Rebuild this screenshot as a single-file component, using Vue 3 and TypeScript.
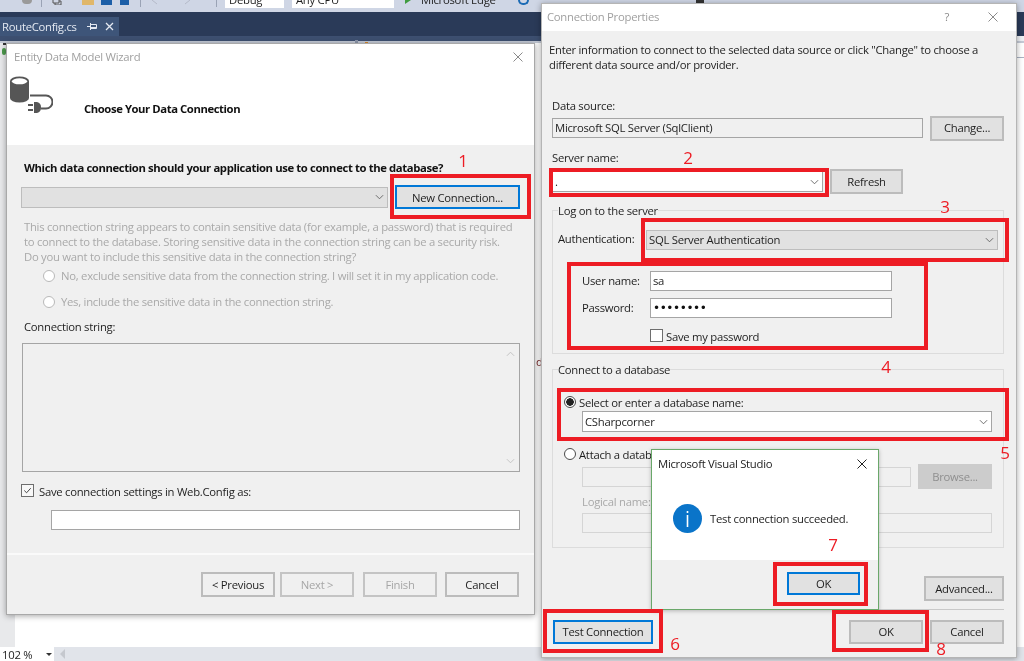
<script setup lang="ts">
interface Box { n: number; x: number; y: number; r: number; b: number; tx: number; ty: number }
const boxes: Box[] = [
  { n: 1, x: 390, y: 174, r: 531, b: 219, tx: 463, ty: 161 },
  { n: 2, x: 549, y: 168, r: 829, b: 197, tx: 688, ty: 158 },
  { n: 3, x: 641, y: 218, r: 1009, b: 262, tx: 945, ty: 207 },
  { n: 4, x: 567, y: 262, r: 928, b: 350, tx: 886, ty: 367 },
  { n: 5, x: 557, y: 388, r: 1009, b: 441, tx: 1005, ty: 453 },
  { n: 6, x: 543, y: 609, r: 663, b: 653, tx: 675, ty: 644 },
  { n: 7, x: 773, y: 562, r: 868, b: 606, tx: 833, ty: 545 },
  { n: 8, x: 832, y: 610, r: 929, b: 652, tx: 941, ty: 649 },
]
const boxStyle = (b: Box) => ({ left: `${b.x}px`, top: `${b.y}px`, width: `${b.r - b.x}px`, height: `${b.b - b.y}px` })
const numStyle = (b: Box) => ({ left: `${b.tx}px`, top: `${b.ty}px` })
</script>

<template>
  <div class="desktop">
    <div class="toolbar">
      <span class="t-round"></span>
      <span class="t-sep t-sep-a"></span>
      <svg class="t-copy" viewBox="0 0 10 5"><path d="M1 0v3h6V0M3 3v2h6V1H7" /></svg>
      <span class="t-folder"></span>
      <span class="t-save"></span>
      <span class="t-save t-save-b"></span>
      <span class="t-sep t-sep-b"></span>
      <svg class="t-arrow" viewBox="0 0 8 6"><path d="M1 0l5 4" /></svg>
      <svg class="t-arrow t-arrow-b" viewBox="0 0 8 6"><path d="M7 0L2 4" /></svg>
      <span class="t-sep t-sep-c"></span>
      <span class="t-select t-debug"><span>Debug</span></span>
      <span class="t-select t-cpu"><span>Any CPU</span></span>
      <span class="t-play"></span>
      <span class="t-edge"><span>Microsoft Edge</span></span>
      <span class="t-ring"></span>
      <span class="t-dark"></span>
    </div>
    <div class="docband">
      <div class="doctab">
        <span class="doctab-name">RouteConfig.cs</span>
        <svg class="doctab-pin" viewBox="0 0 11 9"><path d="M0 4.500h3M3.500 1v7M3.500 2.500h6v4h-6M3.500 5.500h6" /></svg>
        <svg class="doctab-x" viewBox="0 0 9 9"><path d="M1 1l7 7M8 1L1 8" /></svg>
      </div>
    </div>
    <div class="tabstrip"></div>
    <div class="editor">
      <div class="gutter"></div>
      <i class="mark mark-file"></i>
      <i class="mark mark-green"></i>
      <i class="mark mark-split"></i>
      <i class="mark mark-orange"></i>
      <span class="editor-ch">d</span>
      <div class="editor-rule"></div>
    </div>
    <div class="zoombar">
      <span class="zoombox">102 %<i class="zoomcaret"></i></span>
      <i class="zoomleft"></i>
    </div>

    <section class="win wizard">
      <div class="wiz-title">
        <span>Entity Data Model Wizard</span>
        <svg class="close close-light" viewBox="0 0 10 10"><path d="M0.5 0.5l9 9M9.5 0.5l-9 9" /></svg>
      </div>
      <div class="wiz-head">
        <svg class="dbicon" viewBox="0 0 44 37">
          <path d="M1 5a9.500 4.500 0 0 1 19 0v17a9.500 4.500 0 0 1-19 0z" fill="#565656" />
          <ellipse cx="10.500" cy="5.300" rx="7.600" ry="3" fill="#fff" />
          <path d="M21 19.500h16a6.500 6.500 0 0 1 0 13h-5" fill="none" stroke="#565656" stroke-width="2" />
          <path d="M25 26h3a6 5.500 0 0 1 4 5.500a6 5.500 0 0 1-4 5.500h-3z" fill="#565656" />
          <path d="M19 29h5M19 34h5" stroke="#565656" stroke-width="2" />
        </svg>
        <h1>Choose Your Data Connection</h1>
      </div>
      <div class="wiz-body">
        <p class="q">Which data connection should your application use to connect to the database?</p>
        <div class="conn-row">
          <div class="combo combo-off">
            <svg class="chev" viewBox="0 0 10 6"><path d="M1 1l4 4 4-4" /></svg>
          </div>
          <button class="btn btn-primary btn-new">New Connection...</button>
        </div>
        <p class="warn">
          This connection string appears to contain sensitive data (for example, a password) that is required<br />
          to connect to the database. Storing sensitive data in the connection string can be a security risk.<br />
          Do you want to include this sensitive data in the connection string?
        </p>
        <div class="w-radio w-radio-a"><i class="radio radio-off"></i><span>No, exclude sensitive data from the connection string. I will set it in my application code.</span></div>
        <div class="w-radio w-radio-b"><i class="radio radio-off"></i><span>Yes, include the sensitive data in the connection string.</span></div>
        <div class="cs-label">Connection string:</div>
        <div class="cs-area">
          <div class="cs-scroll">
            <svg class="chev chev-up" viewBox="0 0 10 6"><path d="M1 5l4-4 4 4" /></svg>
            <svg class="chev" viewBox="0 0 10 6"><path d="M1 1l4 4 4-4" /></svg>
          </div>
        </div>
        <div class="save-row">
          <span class="check">
            <svg viewBox="0 0 12 12"><path d="M2.500 6l2.500 2.500 4.500-5" /></svg>
          </span>
          <span class="tx-sm">Save connection settings in Web.Config as:</span>
        </div>
        <div class="field save-input"></div>
      </div>
      <div class="wiz-foot">
        <div class="btn-group btn-group-a">
          <button class="btn">&lt; Previous</button>
          <button class="btn btn-off">Next &gt;</button>
        </div>
        <div class="btn-group btn-group-b">
          <button class="btn btn-off">Finish</button>
          <button class="btn">Cancel</button>
        </div>
      </div>
    </section>

    <section class="win props">
      <div class="props-title">
        <span>Connection Properties</span>
        <span class="help">?</span>
        <svg class="close close-light close-props" viewBox="0 0 10 10"><path d="M0.5 0.5l9 9M9.5 0.5l-9 9" /></svg>
      </div>
      <div class="props-body">
        <p class="intro">Enter information to connect to the selected data source or click "Change" to choose a<br />different data source and/or provider.</p>
        <div class="props-main">
          <div class="ds-label">Data source:</div>
          <div class="ds-row">
            <div class="field ds-field">Microsoft SQL Server (SqlClient)</div>
            <button class="btn btn-74">Change...</button>
          </div>
          <div class="sn-label">Server name:</div>
          <div class="sn-row">
            <div class="combo sn-combo">.<svg class="chev" viewBox="0 0 10 6"><path d="M1 1l4 4 4-4" /></svg></div>
            <button class="btn sn-refresh">Refresh</button>
          </div>
          <fieldset class="group group-logon">
            <legend>Log on to the server</legend>
            <div class="auth-row">
              <span class="auth-label">Authentication:</span>
              <div class="combo combo-off auth-combo">SQL Server Authentication<svg class="chev" viewBox="0 0 10 6"><path d="M1 1l4 4 4-4" /></svg></div>
            </div>
            <div class="cred-row cred-user">
              <span class="cred-label">User name:</span>
              <div class="field cred-field">sa</div>
            </div>
            <div class="cred-row cred-pass">
              <span class="cred-label">Password:</span>
              <div class="field cred-field pw">••••••••</div>
            </div>
            <div class="savepw"><span class="check check-plain"></span><span class="tx-sm">Save my password</span></div>
          </fieldset>
          <fieldset class="group group-db">
            <legend>Connect to a database</legend>
            <div class="db-radio db-radio-a"><i class="radio radio-on"></i><span class="tx">Select or enter a database name:</span></div>
            <div class="combo db-combo">CSharpcorner<svg class="chev" viewBox="0 0 10 6"><path d="M1 1l4 4 4-4" /></svg></div>
            <div class="db-radio db-radio-b"><i class="radio"></i><span class="tx">Attach a database file:</span></div>
            <div class="attach-row">
              <div class="field field-off attach-field"></div>
              <button class="btn btn-74 btn-dim">Browse...</button>
            </div>
            <div class="logical">Logical name:</div>
            <div class="field field-off logical-field"></div>
          </fieldset>
          <div class="adv-row"><button class="btn btn-adv">Advanced...</button></div>
          <div class="props-sep"></div>
          <div class="props-foot">
            <button class="btn btn-primary btn-test">Test Connection</button>
            <button class="btn btn-74 btn-ok">OK</button>
            <button class="btn btn-74">Cancel</button>
          </div>
        </div>
      </div>
    </section>

    <section class="msg">
      <div class="msg-title">
        <span>Microsoft Visual Studio</span>
        <svg class="close close-dark" viewBox="0 0 10 10"><path d="M0.5 0.5l9 9M9.5 0.5l-9 9" /></svg>
      </div>
      <div class="msg-body">
        <svg class="info" viewBox="0 0 29 29">
          <circle cx="14.500" cy="14.500" r="14.500" fill="#0a74c9" />
          <rect x="13.700" y="11" width="1.600" height="12" fill="#fff" />
          <rect x="13.700" y="7" width="1.600" height="2" fill="#fff" />
        </svg>
        <span>Test connection succeeded.</span>
      </div>
      <div class="msg-foot">
        <button class="btn btn-primary btn-msg">OK</button>
      </div>
    </section>

    <div v-for="b in boxes" :key="b.n" class="redbox" :style="boxStyle(b)"></div>
    <span v-for="b in boxes" :key="'n' + b.n" class="rednum" :style="numStyle(b)">{{ b.n }}</span>
  </div>
</template>

<style>
html, body { margin: 0; background: #fff; }
</style>

<style scoped>
* { box-sizing: border-box; }
p, h1 { margin: 0; }
.desktop {
  position: relative;
  width: 1024px;
  height: 661px;
  overflow: hidden;
  display: flex;
  flex-direction: column;
  background: #fff;
  font-family: "Open Sans", "Noto Sans", sans-serif;
  font-size: 11.3px;
  letter-spacing: -0.27px;
  line-height: 16px;
  color: #1e1e1e;
  filter: blur(0.3px);
}
.tx { margin-top: 2px; white-space: nowrap; }
.tx-sm { margin-top: 1px; white-space: nowrap; }

/* VS chrome */
.toolbar {
  height: 12px;
  flex: none;
  display: flex;
  align-items: flex-start;
  background: #cfd6e5;
  overflow: hidden;
  padding-left: 22px;
}
.t-round { width: 10px; height: 4px; background: #9a9a9a; border-radius: 0 0 5px 5px; }
.t-sep { width: 1px; height: 7px; background: #9aa3b5; }
.t-sep-a { margin-left: 9px; }
.t-copy { width: 10px; height: 5px; margin-left: 10px; fill: none; stroke: #555; }
.t-folder { width: 12px; height: 5px; margin-left: 20px; background: #e0b76a; }
.t-save { width: 11px; height: 5px; margin-left: 7px; background: #1d5fa8; }
.t-save-b { width: 9px; margin-left: 8px; }
.t-sep-b { margin-left: 11px; }
.t-arrow { width: 8px; height: 6px; margin-left: 10px; fill: none; stroke: #b4bac8; }
.t-arrow-b { margin-left: 24px; }
.t-sep-c { margin-left: 25px; }
.t-select { height: 8px; margin-left: 8px; background: #fff; overflow: hidden; padding-left: 4px; }
.t-select span, .t-edge span { display: block; margin-top: -8px; white-space: nowrap; }
.t-debug { width: 59px; }
.t-cpu { width: 102px; }
.t-play {
  margin-left: 11px;
  width: 0;
  height: 0;
  border-left: 6px solid #3f9b3f;
  border-top: 4px solid transparent;
  border-bottom: 4px solid transparent;
  margin-top: -4px;
}
.t-edge { margin-left: 10px; width: 80px; height: 8px; overflow: hidden; }
.t-ring { margin-left: 17px; width: 11px; height: 5px; border: 2px solid #1c6bb5; border-top: 0; border-radius: 0 0 6px 6px; }
.t-dark { margin-left: 167px; width: 8px; height: 3px; background: #333; }
.docband {
  height: 24px;
  flex: none;
  background: #2a3a58;
  padding-top: 5px;
}
.doctab {
  width: 119px;
  height: 19px;
  background: #3e5579;
  color: #e4e9f2;
  display: flex;
  align-items: center;
  padding-left: 2px;
}
.doctab-name { width: 85px; }
.doctab-pin { width: 11px; height: 9px; fill: none; stroke: #e4e9f2; stroke-width: 1; }
.doctab-x { width: 9px; height: 9px; margin-left: 7px; fill: none; stroke: #e4e9f2; stroke-width: 1.3; }
.tabstrip { height: 5px; flex: none; background: linear-gradient(90deg, #3d4f70 1017px, #eef0f4 1017px); }
.editor { flex: 1; position: relative; background: #fff; border-top: 2px solid #c4cad6; }
.gutter { width: 15px; height: 100%; background: #e8e9eb; }
.mark { position: absolute; display: block; }
.mark-file { left: 3px; top: 0; width: 12px; height: 2px; background: #333; }
.mark-green { left: 2px; top: 5px; width: 4px; height: 7px; background: #4d9a4d; border-radius: 2px; }
.mark-split { left: 355px; top: -3px; width: 3px; height: 3px; background: #8c96aa; }
.mark-orange { left: 365px; top: -1px; width: 3px; height: 3px; background: #d98a2b; }
.editor-ch { position: absolute; left: 536px; top: 311px; font-size: 11px; color: #7a2a2a; }
.editor-rule { position: absolute; right: 0; top: 14px; width: 10px; height: 1px; background: #a9b2c2; }
.zoombar {
  height: 14px;
  flex: none;
  background: #e1e4ea;
  display: flex;
  align-items: center;
}
.zoombox { width: 54px; height: 14px; background: #fff; padding-left: 2px; position: relative; line-height: 15px; display: flex; justify-content: space-between; align-items: center; padding-right: 2px; }
.zoomcaret { width: 0; height: 0; border-left: 3px solid transparent; border-right: 3px solid transparent; border-top: 3px solid #333; }
.zoomleft { width: 0; height: 0; margin-left: 6px; border-right: 5px solid #c5c8ce; border-top: 5px solid transparent; border-bottom: 5px solid transparent; }

/* shared */
.win {
  position: absolute;
  background: #f0f0f0;
  border: 1px solid #a9a9a9;
  box-shadow: 0 1px 6px rgba(0, 0, 0, 0.35);
}
.btn {
  display: flex;
  align-items: center;
  justify-content: center;
  width: 74px;
  height: 25px;
  padding: 0;
  font: inherit;
  letter-spacing: inherit;
  color: #1e1e1e;
  background: #e1e1e1;
  border: 2px solid #bcbcbc;
  flex: none;
}
.btn-74 { width: 74px; }
.btn-off { color: #a6a6a6; border-color: #c4c4c4; background: #f0f0f0; }
.btn-dim { color: #8f8f8f; background: #cccccc; border-color: #cccccc; }
.btn-primary { border: 2px solid #0078d7; }
.combo {
  position: relative;
  background: #fff;
  border: 1.5px solid #a5a5a5;
  display: flex;
  align-items: center;
  padding-left: 2px;
  line-height: 16px;
}
.combo-off { background: #e1e1e1; border-color: #bdbdbd; }
.chev {
  position: absolute;
  right: 3px;
  top: 50%;
  width: 9px;
  height: 6px;
  margin-top: -3px;
  fill: none;
  stroke: #606060;
  stroke-width: 1;
}
.field {
  background: #fff;
  border: 1.5px solid #a5a5a5;
  display: flex;
  align-items: center;
  padding-left: 2px;
}
.field-off { background: #f0f0f0; border: 1px solid #d5d5d5; }
.radio {
  display: block;
  flex: none;
  width: 12px;
  height: 12px;
  border-radius: 50%;
  border: 1px solid #4a4a4a;
  background: #fff;
  margin-right: 3px;
}
.radio-off { border-color: #b9b9b9; margin-right: 6px; }
.radio-on { background: radial-gradient(circle, #222 0 3.500px, #fff 4px); }
.check {
  width: 13px;
  height: 13px;
  border: 1px solid #6e6e6e;
  background: #f8f8f8;
  flex: none;
  display: block;
}
.check svg { display: block; width: 11px; height: 11px; fill: none; stroke: #333; stroke-width: 1; }
.close { width: 10px; height: 10px; fill: none; stroke-width: 1; flex: none; }
.close-light { stroke: #8a8a8a; }
.close-dark { stroke: #222; }

/* wizard */
.wizard { left: 6px; top: 43px; width: 529px; height: 572px; }
.wiz-title {
  height: 27px;
  padding: 0 11px 2px 7px;
  display: flex;
  justify-content: space-between;
  align-items: center;
  background: #fff;
  color: #a0a0a0;
}
.wiz-head { height: 74px; background: #fff; display: flex; align-items: flex-start; }
.dbicon { width: 44px; height: 37px; margin: 5px 0 0 2px; flex: none; }
.wiz-head h1 { font-size: 11.3px; height: 16px; line-height: 18px; font-weight: 700; letter-spacing: -0.42px; color: #111; margin: 29px 0 0 31px; }
.wiz-body { height: 408px; padding: 14px 15px 0 14px; }
.q { font-weight: 700; letter-spacing: -0.38px; color: #111; padding-left: 3px; white-space: nowrap; height: 16px; line-height: 18px; }
.conn-row { margin-top: 10px; height: 24px; display: flex; align-items: center; justify-content: space-between; width: 499px; }
.conn-row .combo { width: 367px; height: 21px; }
.btn-new { width: 125px; height: 24px; padding-top: 1px; }
.warn { margin-top: 10px; padding-left: 3px; line-height: 15px; color: #a9a9a9; white-space: nowrap; }
.w-radio { display: flex; align-items: center; color: #a9a9a9; margin-left: 22px; height: 16px; white-space: nowrap; }
.w-radio-a { margin-top: 4px; }
.w-radio-b { margin-top: 10px; }
.cs-label { margin-top: 8px; padding-left: 3px; height: 16px; line-height: 18px; }
.cs-area {
  margin: 9px 0 0 1px;
  width: 498px;
  height: 129px;
  border: 1.5px solid #a5a5a5;
  border-left-width: 1px;
  display: flex;
  justify-content: flex-end;
}
.cs-scroll { position: relative; width: 16px; height: 100%; background: #f0f0f0; }
.cs-scroll .chev { stroke: #c0c0c0; top: auto; bottom: 7px; margin: 0; right: 4px; }
.cs-scroll .chev-up { top: 7px; bottom: auto; }
.save-row { margin-top: 12px; height: 13px; display: flex; align-items: center; gap: 5px; line-height: 13px; }
.save-input { margin: 13px 0 0 30px; width: 469px; height: 20px; }
.wiz-foot {
  height: 62px;
  border-top: 2px solid #fafafa;
  padding: 17px 15px 0 0;
  display: flex;
  justify-content: flex-end;
  gap: 9px;
}
.btn-group { display: flex; }
.btn-group-a { gap: 5px; }
.btn-group-b { gap: 8px; }
.wiz-foot .btn { background: #f0f0f0; }

/* connection properties */
.props { left: 541px; top: 3px; width: 476px; height: 655px; border-color: #b5b5b5; }
.props-title {
  height: 27px;
  background: #fff;
  color: #a0a0a0;
  display: flex;
  align-items: center;
  padding: 0 0 2px 5px;
}
.help { margin-left: auto; color: #8a8a8a; }
.close-props { margin: 0 18px 0 39px; }
.props-body { padding-top: 11px; }
.intro { padding-left: 7px; line-height: 15px; white-space: nowrap; height: 30px; }
.props-main { padding-left: 10px; width: 462px; }
.ds-label { margin-top: 25px; height: 16px; line-height: 18px; }
.ds-row { margin-top: 3px; height: 24px; display: flex; align-items: center; gap: 7px; }
.ds-field { width: 371px; height: 20px; background: #f0f0f0; }
.sn-label { margin-top: 9px; height: 16px; line-height: 18px; }
.sn-row { margin-top: 4px; height: 25px; display: flex; align-items: center; gap: 7px; }
.sn-combo { width: 271px; height: 21px; }
.sn-refresh { width: 73px; }
.group {
  margin: 8px 0 0;
  padding: 0;
  min-width: 0;
  width: 452px;
  border: 1px solid #dcdcdc;
}
.group legend { margin-left: 5px; padding: 0; height: 16px; line-height: 18px; }
.group-logon { height: 152px; }
.auth-row { margin-top: 12px; padding-left: 5px; display: flex; align-items: flex-start; }
.auth-label { width: 88px; height: 16px; line-height: 18px; }
.auth-combo { width: 352px; height: 20px; padding-left: 2px; }
.cred-row { display: flex; align-items: center; padding-left: 29px; }
.cred-user { margin-top: 21px; }
.cred-pass { margin-top: 7px; }
.cred-label { width: 68px; }
.cred-field { width: 242px; height: 20px; }
.pw { font-family: "DejaVu Sans", sans-serif; font-size: 12px; letter-spacing: -0.4px; color: #111; }
.savepw { margin-top: 11px; padding-left: 97px; display: flex; align-items: center; gap: 3px; height: 13px; line-height: 13px; }
.check-plain { background: #fff; }
.group-db { margin-top: 7px; height: 187px; }
.db-radio { display: flex; align-items: center; padding-left: 11px; height: 16px; }
.db-radio-a { margin-top: 17px; }
.db-radio-b { margin-top: 14px; }
.db-combo { margin: 1px 0 0 29px; width: 410px; height: 21px; }
.attach-row { margin: 2px 0 0 29px; display: flex; align-items: center; gap: 7px; height: 25px; }
.attach-field { width: 329px; height: 20px; }
.logical { margin: 5px 0 0 29px; color: #a9a9a9; }
.logical-field { margin: 3px 0 0 29px; width: 410px; height: 20px; }
.adv-row { margin-top: 28px; display: flex; justify-content: flex-end; width: 452px; }
.btn-adv { width: 80px; }
.props-sep { margin-top: 8px; width: 452px; height: 1px; background: #c9c9c9; }
.props-foot { margin-top: 10px; width: 452px; display: flex; align-items: center; gap: 7px; padding-left: 1px; }
.btn-test { width: 100px; height: 24px; margin-right: auto; }
.btn-ok { height: 24px; }
.props-foot .btn-74:last-child { height: 24px; }

/* message box */
.msg {
  position: absolute;
  left: 651px;
  top: 449px;
  width: 228px;
  height: 161px;
  background: #fff;
  border: 1px solid #6aa86a;
  box-shadow: 0 1px 4px rgba(0, 0, 0, 0.25);
}
.msg-title { height: 27px; display: flex; align-items: center; justify-content: space-between; padding: 0 11px 0 6px; color: #222; }
.msg-body { height: 83px; display: flex; align-items: center; padding-left: 21px; gap: 8px; white-space: nowrap; }
.info { width: 29px; height: 29px; flex: none; }
.msg-foot { height: 49px; background: #f0f0f0; padding: 12px 18px 0 0; display: flex; justify-content: flex-end; }
.btn-msg { width: 73px; height: 23px; }

/* annotations */
.redbox { position: absolute; border: 4px solid #ed1c24; pointer-events: none; }
.rednum {
  position: absolute;
  transform: translate(-50%, -50%);
  font-size: 17px;
  line-height: 20px;
  color: #ed1c24;
  letter-spacing: 0;
}
</style>
